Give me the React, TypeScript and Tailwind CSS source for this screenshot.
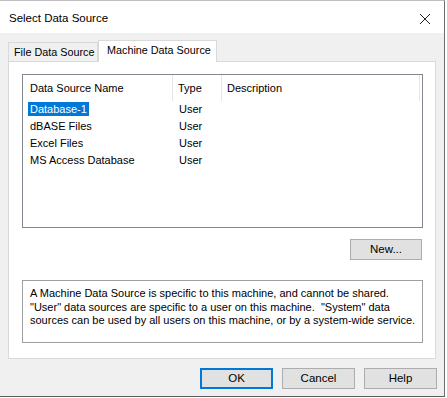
import React from "react";

const rows = [
  { name: "Database-1", type: "User", selected: true },
  { name: "dBASE Files", type: "User" },
  { name: "Excel Files", type: "User" },
  { name: "MS Access Database", type: "User" },
];

function Btn({ label, def, w = "w-[73px]" }: { label: string; def?: boolean; w?: string }) {
  return (
    <div
      className={
        w +
        " h-[21px] flex items-center justify-center bg-[#e1e1e1] text-[11.5px] text-black " +
        (def ? "border-2 border-[#0078d7]" : "border border-[#adadad]")
      }
    >
      {label}
    </div>
  );
}

export default function App() {
  return (
    <div
      className="w-[447px] h-[398px] bg-white overflow-hidden"
      style={{ fontFamily: '"Liberation Sans", Arial, sans-serif' }}
    >
      <div className="w-[445px] h-[397px] bg-[#f0f0f0] border-t border-[#bdbdbd] border-r border-b border-r-[#6b6b6b] border-b-[#5a5a5a] flex flex-col">
        {/* Title bar */}
        <div className="h-[32px] bg-white flex items-center justify-between pl-[9px] pr-[9px] pt-[3px]">
          <span className="text-[11.5px] text-black">Select Data Source</span>
          <svg width="12" height="12" viewBox="0 0 12 12" className="mr-[4px]">
            <path d="M1 1 L11 11 M11 1 L1 11" stroke="#222" strokeWidth="1" />
          </svg>
        </div>

        {/* Tabs */}
        <div className="flex items-end pl-[8px] mt-[6px] h-[22px] relative z-10">
          <div className="h-[19px] w-[90px] border border-b-0 border-[#d9d9d9] bg-[#f0f0f0] flex items-center pl-[5px] pt-[1px] text-[10.8px] text-black whitespace-nowrap overflow-hidden">
            File Data Source
          </div>
          <div className="h-[22px] w-[119px] border border-b-0 border-[#d9d9d9] bg-white flex items-center pl-[8px] pb-[2px] text-[10.8px] text-black -mb-px whitespace-nowrap">
            Machine Data Source
          </div>
        </div>

        {/* Panel */}
        <div className="ml-[8px] w-[428px] h-[298px] bg-white border border-[#d9d9d9] flex flex-col pl-[13px] pt-[12px]">
          {/* List */}
          <div className="w-[401px] h-[154px] border border-[#828790] bg-white flex flex-col">
            <div className="h-[26px] flex text-[11px] text-black">
              <div className="w-[150px] pl-[7px] flex items-center border-r border-[#e5e5e5]">Data Source Name</div>
              <div className="w-[49px] pl-[5px] flex items-center border-r border-[#e5e5e5]">Type</div>
              <div className="w-[198px] pl-[5px] flex items-center border-r border-[#e5e5e5]">Description</div>
            </div>
            <div className="flex flex-col">
              {rows.map((r) => (
                <div key={r.name} className="h-[17px] flex items-center text-[11px] text-black">
                  <div className="w-[150px] pl-[5px]">
                    <span
                      className={
                        "px-[2px] py-[1px] " + (r.selected ? "bg-[#0078d7] text-white" : "")
                      }
                    >
                      {r.name}
                    </span>
                  </div>
                  <div className="w-[49px] pl-[6px]">{r.type}</div>
                </div>
              ))}
            </div>
          </div>

          {/* New button */}
          <div className="flex justify-end w-[401px] mt-[11px] pr-[1px]">
            <Btn label="New..." w="w-[72px]" />
          </div>

          {/* Description */}
          <div className="mt-[20px] w-[401px] h-[63px] border border-[#a0a0a0] pl-[7px] pt-[6px] text-[11px] leading-[13.5px] text-black">
            A Machine Data Source is specific to this machine, and cannot be shared.
            <br />
            "User" data sources are specific to a user on this machine.&nbsp; "System" data
            <br />
            sources can be used by all users on this machine, or by a system-wide service.
          </div>
        </div>

        {/* Bottom buttons */}
        <div className="flex justify-end gap-[9px] pr-[7px] mt-[9px]">
          <Btn label="OK" def />
          <Btn label="Cancel" />
          <Btn label="Help" />
        </div>
      </div>
    </div>
  );
}
